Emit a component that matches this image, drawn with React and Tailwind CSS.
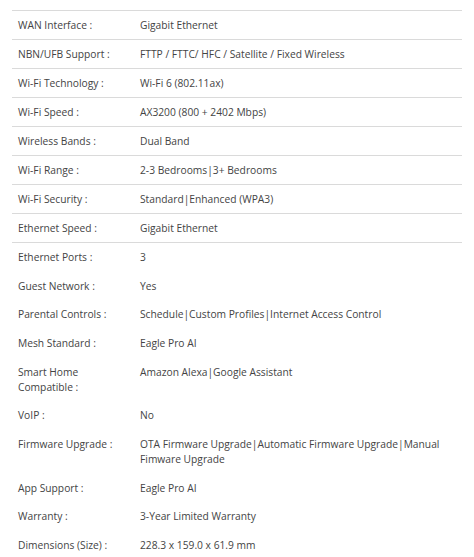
const specs = [
  { label: "WAN Interface :", value: "Gigabit Ethernet", line: true },
  { label: "NBN/UFB Support :", value: "FTTP / FTTC/ HFC / Satellite / Fixed Wireless", line: true },
  { label: "Wi-Fi Technology :", value: "Wi-Fi 6 (802.11ax)", line: true },
  { label: "Wi-Fi Speed :", value: "AX3200 (800 + 2402 Mbps)", line: true },
  { label: "Wireless Bands :", value: "Dual Band", line: true },
  { label: "Wi-Fi Range :", value: "2-3 Bedrooms|3+ Bedrooms", line: true },
  { label: "Wi-Fi Security :", value: "Standard|Enhanced (WPA3)", line: true },
  { label: "Ethernet Speed :", value: "Gigabit Ethernet", line: true },
  { label: "Ethernet Ports :", value: "3" },
  { label: "Guest Network :", value: "Yes" },
  { label: "Parental Controls :", value: "Schedule|Custom Profiles|Internet Access Control" },
  { label: "Mesh Standard :", value: "Eagle Pro AI" },
  { label: "Smart Home Compatible :", value: "Amazon Alexa|Google Assistant" },
  { label: "VoIP :", value: "No" },
  { label: "Firmware Upgrade :", value: "OTA Firmware Upgrade|Automatic Firmware Upgrade|Manual Fimware Upgrade" },
  { label: "App Support :", value: "Eagle Pro AI" },
  { label: "Warranty :", value: "3-Year Limited Warranty" },
  { label: "Dimensions (Size) :", value: "228.3 x 159.0 x 61.9 mm" },
]

const App = () => {
  return (
    <div className="min-h-screen bg-white pt-[10px] px-3 font-['Open_Sans',sans-serif] text-[10.25px] leading-[15px] text-[#444]">
      <div className="border-t border-[#dadada]">
        {specs.map((s) => (
          <div
            key={s.label}
            className={`flex pt-[7px] ${s.line ? "pb-[6px] border-b border-[#dadada]" : "pb-[6.67px]"}`}
          >
            <div className="w-[128px] pl-[6px] pr-4 shrink-0">{s.label}</div>
            <div className="flex-1 pr-4">{s.value}</div>
          </div>
        ))}
      </div>
    </div>
  )
}

export default App
